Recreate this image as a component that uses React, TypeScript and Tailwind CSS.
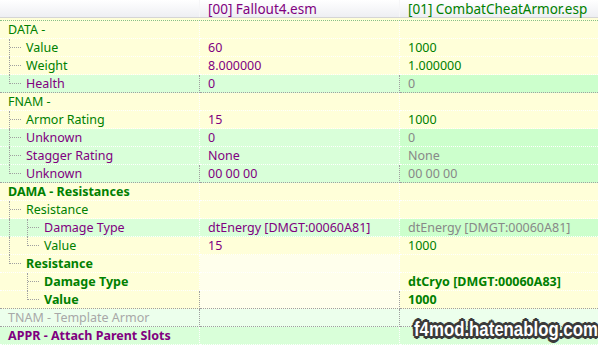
import React from 'react';

type Guide = 'pipe' | 'tee' | 'end' | 'blank';

interface Row {
  label: string;
  guides: Guide[];
  bold?: boolean;
  tone: string;
  v2?: string;
  v3?: string;
  tone2?: string;
  tone3?: string;
  bg1: string;
  bg2: string;
  bg3: string;
  vbold?: boolean;
  end?: boolean;
}

const Y = 'bg-[#ffffd9]';
const G = 'bg-[#d9ffd9]';
const G2 = 'bg-[#ccffcc]';
const LY = 'bg-[#ffffec]';
const LG = 'bg-[#ecffec]';

const GREEN = 'text-[#008000]';
const PURPLE = 'text-[#800080]';
const GRAY = 'text-[#888888]';
const LIGHT = 'text-[#a8a8a8]';

const rows: Row[] = [
  { label: 'DATA -', guides: [], tone: GREEN, bg1: Y, bg2: Y, bg3: Y },
  { label: 'Value', guides: ['tee'], tone: GREEN, v2: '60', tone2: PURPLE, v3: '1000', tone3: GREEN, bg1: Y, bg2: Y, bg3: Y },
  { label: 'Weight', guides: ['tee'], tone: GREEN, v2: '8.000000', tone2: PURPLE, v3: '1.000000', tone3: GREEN, bg1: Y, bg2: Y, bg3: Y },
  { label: 'Health', guides: ['end'], tone: PURPLE, v2: '0', tone2: PURPLE, v3: '0', tone3: GRAY, bg1: G, bg2: G, bg3: G2, end: true },
  { label: 'FNAM -', guides: [], tone: GREEN, bg1: Y, bg2: Y, bg3: Y },
  { label: 'Armor Rating', guides: ['tee'], tone: GREEN, v2: '15', tone2: PURPLE, v3: '1000', tone3: GREEN, bg1: Y, bg2: Y, bg3: Y },
  { label: 'Unknown', guides: ['tee'], tone: PURPLE, v2: '0', tone2: PURPLE, v3: '0', tone3: GRAY, bg1: G, bg2: G, bg3: G2 },
  { label: 'Stagger Rating', guides: ['tee'], tone: PURPLE, v2: 'None', tone2: PURPLE, v3: 'None', tone3: GRAY, bg1: G, bg2: G, bg3: G2 },
  { label: 'Unknown', guides: ['end'], tone: PURPLE, v2: '00 00 00', tone2: PURPLE, v3: '00 00 00', tone3: GRAY, bg1: G, bg2: G, bg3: G2, end: true },
  { label: 'DAMA - Resistances', guides: [], bold: true, tone: GREEN, bg1: Y, bg2: Y, bg3: Y },
  { label: 'Resistance', guides: ['tee'], tone: GREEN, bg1: Y, bg2: Y, bg3: Y },
  { label: 'Damage Type', guides: ['pipe', 'tee'], tone: PURPLE, v2: 'dtEnergy [DMGT:00060A81]', tone2: PURPLE, v3: 'dtEnergy [DMGT:00060A81]', tone3: GRAY, bg1: G, bg2: G, bg3: G2 },
  { label: 'Value', guides: ['pipe', 'end'], tone: GREEN, v2: '15', tone2: PURPLE, v3: '1000', tone3: GREEN, bg1: Y, bg2: Y, bg3: Y },
  { label: 'Resistance', guides: ['end'], bold: true, tone: GREEN, bg1: Y, bg2: LY, bg3: Y },
  { label: 'Damage Type', guides: ['blank', 'tee'], bold: true, tone: GREEN, v3: 'dtCryo [DMGT:00060A83]', tone3: GREEN, vbold: true, bg1: Y, bg2: LY, bg3: Y },
  { label: 'Value', guides: ['blank', 'end'], bold: true, tone: GREEN, v3: '1000', tone3: GREEN, vbold: true, bg1: Y, bg2: LY, bg3: Y, end: true },
  { label: 'TNAM - Template Armor', guides: [], tone: LIGHT, bg1: LG, bg2: LG, bg3: LG, end: true },
  { label: 'APPR - Attach Parent Slots', guides: [], bold: true, tone: PURPLE, bg1: G, bg2: G, bg3: G },
];

function TreeGuide({ kind }: { kind: Guide }) {
  return (
    <div className="relative w-[18px] h-full shrink-0">
      {(kind === 'pipe' || kind === 'tee') && (
        <span className="absolute left-[9px] top-0 bottom-[-1px] border-l border-dotted border-[#a0a0a0]" />
      )}
      {kind === 'end' && (
        <span className="absolute left-[9px] top-0 h-[9px] border-l border-dotted border-[#a0a0a0]" />
      )}
      {(kind === 'tee' || kind === 'end') && (
        <span className="absolute left-[10px] top-[8px] w-[11px] border-t border-dotted border-[#a0a0a0]" />
      )}
    </div>
  );
}

function RecordRow({ row }: { row: Row }) {
  const line = row.end ? 'border-[#a0a0a0]' : 'border-white';
  return (
    <div className="flex h-[18px]">
      <div className={`w-[200px] flex items-stretch border-b border-r border-dotted ${line} ${row.bg1}`}>
        {row.guides.map((g, i) => (
          <TreeGuide key={i} kind={g} />
        ))}
        <span className={`pl-2 whitespace-nowrap ${row.tone} ${row.bold ? 'font-bold' : ''}`}>{row.label}</span>
      </div>
      <div className={`w-[200px] pl-2 border-b border-r border-dotted ${line} ${row.bg2}`}>
        <span className={`whitespace-nowrap ${row.tone2 ?? ''}`}>{row.v2}</span>
      </div>
      <div className={`flex-1 pl-2 border-b border-dotted ${line} ${row.bg3}`}>
        <span className={`whitespace-nowrap ${row.tone3 ?? ''} ${row.vbold ? 'font-bold' : ''}`}>{row.v3}</span>
      </div>
    </div>
  );
}

export default function App() {
  return (
    <div className="relative w-[598px] h-[345px] overflow-hidden bg-[#ffffd9] font-['Noto_Sans',sans-serif] text-[12.5px] leading-[18px]">
      <div className="flex h-[18px] border-b border-[#d5d5d5] bg-gradient-to-b from-white to-[#eeeff3] text-[13.5px] leading-[18px]">
        <div className="w-[200px] border-r border-[#f6f6f8]" />
        <div className={`w-[200px] pl-2 border-r border-[#f6f6f8] ${PURPLE}`}>[00] Fallout4.esm</div>
        <div className={`flex-1 pl-2 ${GREEN}`}>[01] CombatCheatArmor.esp</div>
      </div>
      <div className="h-[3px] border-b border-dotted border-[#86c086]" />
      {rows.map((r, i) => (
        <RecordRow key={i} row={r} />
      ))}
      <div className="absolute left-[414px] top-[314px] origin-left scale-x-[0.8] whitespace-nowrap font-['Liberation_Sans',sans-serif] font-bold text-[21px] leading-[30px] text-white [text-shadow:2px_0_0_#3a3a3a,-2px_0_0_#3a3a3a,0_2px_0_#3a3a3a,0_-2px_0_#3a3a3a,2px_2px_0_#3a3a3a,-2px_2px_0_#3a3a3a,2px_-2px_0_#3a3a3a,-2px_-2px_0_#3a3a3a,3px_0_0_#3a3a3a,-3px_0_0_#3a3a3a,0_3px_0_#3a3a3a,0_-3px_0_#3a3a3a,0_0_4px_#777]">
        f4mod.hatenablog.com
      </div>
    </div>
  );
}
